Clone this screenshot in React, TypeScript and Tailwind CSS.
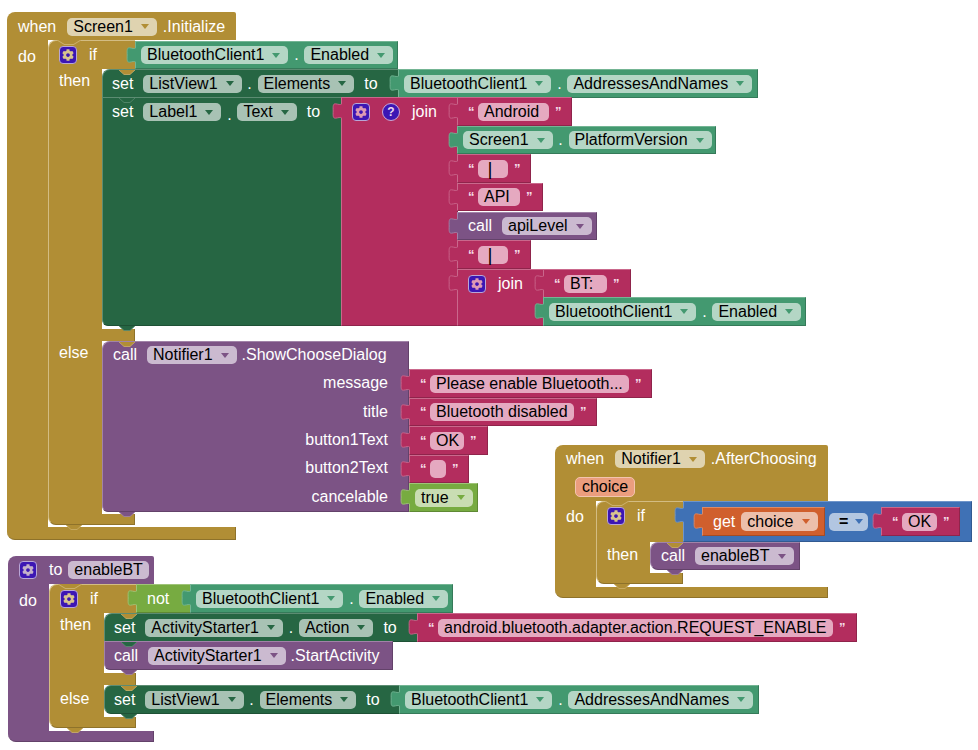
import type { ReactNode } from 'react'
import { FaCog } from 'react-icons/fa'

const TONES = {
  gold: {
    bg: 'bg-[#b18e35]',
    edge: 'border-t-[#cbb06c] border-l-[#cbb06c] border-r-[#8e722a] border-b-[#8e722a]',
    field: 'bg-[#dfd3b0]',
    arrow: 'text-[#b18e35]',
    gear: 'text-[#d8c48e]',
    tab: 'fill-[#b18e35] stroke-[#cbb06c]',
  },
  getter: {
    bg: 'bg-[#439970]',
    edge: 'border-t-[#74b594] border-l-[#74b594] border-r-[#357a59] border-b-[#357a59]',
    field: 'bg-[#b4d6c5]',
    arrow: 'text-[#439970]',
    gear: 'text-[#b4d6c5]',
    tab: 'fill-[#439970] stroke-[#74b594]',
  },
  setter: {
    bg: 'bg-[#266643]',
    edge: 'border-t-[#5c8c72] border-l-[#5c8c72] border-r-[#1e5135] border-b-[#1e5135]',
    field: 'bg-[#a8c2b4]',
    arrow: 'text-[#266643]',
    gear: 'text-[#a8c2b4]',
    tab: 'fill-[#266643] stroke-[#5c8c72]',
  },
  text: {
    bg: 'bg-[#b32d5e]',
    edge: 'border-t-[#ca688c] border-l-[#ca688c] border-r-[#8f244b] border-b-[#8f244b]',
    field: 'bg-[#e5a9c0]',
    arrow: 'text-[#b32d5e]',
    gear: 'text-[#dd9ab4]',
    tab: 'fill-[#b32d5e] stroke-[#ca688c]',
  },
  proc: {
    bg: 'bg-[#7c5385]',
    edge: 'border-t-[#a183a8] border-l-[#a183a8] border-r-[#63426a] border-b-[#63426a]',
    field: 'bg-[#cbbad0]',
    arrow: 'text-[#7c5385]',
    gear: 'text-[#c4b0ca]',
    tab: 'fill-[#7c5385] stroke-[#a183a8]',
  },
  logic: {
    bg: 'bg-[#77ab41]',
    edge: 'border-t-[#9fc478] border-l-[#9fc478] border-r-[#5f8934] border-b-[#5f8934]',
    field: 'bg-[#c9ddb3]',
    arrow: 'text-[#77ab41]',
    gear: 'text-[#c9ddb3]',
    tab: 'fill-[#77ab41] stroke-[#9fc478]',
  },
  math: {
    bg: 'bg-[#3f71b5]',
    edge: 'border-t-[#6f95ca] border-l-[#6f95ca] border-r-[#325a91] border-b-[#325a91]',
    field: 'bg-[#b2c6e1]',
    arrow: 'text-[#3f71b5]',
    gear: 'text-[#b2c6e1]',
    tab: 'fill-[#3f71b5] stroke-[#6f95ca]',
  },
  variable: {
    bg: 'bg-[#d05f2d]',
    edge: 'border-t-[#dd8a66] border-l-[#dd8a66] border-r-[#a64c24] border-b-[#a64c24]',
    field: 'bg-[#ecbfab]',
    arrow: 'text-[#d05f2d]',
    gear: 'text-[#ecbfab]',
    tab: 'fill-[#d05f2d] stroke-[#dd8a66]',
  },
}

type Tone = keyof typeof TONES

type BlockProps = {
  tone: Tone
  className: string
  children?: ReactNode
}

const Block = ({ tone, className, children }: BlockProps) => (
  <div className={`relative flex shrink-0 items-center border ${TONES[tone].bg} ${TONES[tone].edge} ${className}`}>
    {children}
  </div>
)

// output plug on the left side of a value block
const Plug = ({ tone }: { tone: Tone }) => (
  <svg viewBox="0 0 10 16" className={`absolute -left-[10px] top-[5px] z-10 h-[16px] w-[10px] ${TONES[tone].tab}`}>
    <path
      d="M10 0.5 C8.5 2.5 6 1 3.5 0.8 C1 0.6 1 3 1.2 8 C1 13 1 15.4 3.5 15.2 C6 15 8.5 13.5 10 15.5"
      strokeWidth="0.9"
    />
  </svg>
)

const Value = ({ tone, className, children }: BlockProps) => (
  <Block tone={tone} className={className}>
    <Plug tone={tone} />
    {children}
  </Block>
)

// the little trapezoid that links two statement blocks
const Tab = ({ tone, className }: { tone: Tone; className: string }) => (
  <svg viewBox="0 0 16 5" preserveAspectRatio="none" className={`absolute z-10 h-[5px] ${TONES[tone].tab} ${className}`}>
    <path d="M0 0 L5 4.5 H11 L16 0" strokeWidth="0.8" />
  </svg>
)

// statement block: parent's tab cut in on top, own tab hanging below
const Statement = ({ tone, className, children }: BlockProps) => (
  <Block tone={tone} className={className}>
    <Tab tone="gold" className="left-[16px] top-0 w-[16px]" />
    {children}
    <Tab tone={tone} className="-bottom-[6px] left-[16px] w-[16px]" />
  </Block>
)

const Arrow = ({ tone }: { tone: Tone }) => (
  <svg viewBox="0 0 8 5" className={`h-[5px] w-[8px] fill-current ${TONES[tone].arrow}`}>
    <path d="M0 0 H8 L4 5 Z" />
  </svg>
)

const Field = ({ tone, label }: { tone: Tone; label: string }) => (
  <span className={`flex h-[18px] items-center gap-[8px] rounded-[5px] pl-[6px] pr-[8px] leading-[18px] text-black ${TONES[tone].field}`}>
    {label}
    <Arrow tone={tone} />
  </span>
)

const Dot = () => <span className="w-[16px] text-center text-white">.</span>

const Word = ({ children, className = '' }: { children: ReactNode; className?: string }) => (
  <span className={`whitespace-pre leading-[18px] text-white ${className}`}>{children}</span>
)

const Gear = ({ tone }: { tone: Tone }) => (
  <span className={`flex size-[18px] shrink-0 items-center justify-center rounded-[4px] border border-[#b9a6d6] bg-[#3c16b4] ${TONES[tone].gear}`}>
    <FaCog size={12} />
  </span>
)

const Quote = ({ children, className = '' }: { children: string; className?: string }) => (
  <span className={`w-[6px] text-[13px] font-bold leading-[18px] text-[#f6dfe8] ${className}`}>{children}</span>
)

const Str = ({ className, label, fieldClass = '' }: { className: string; label: ReactNode; fieldClass?: string }) => (
  <Value tone="text" className={`gap-[4px] pl-[10px] ${className}`}>
    <Quote>“</Quote>
    <span className={`flex h-[18px] items-center rounded-[5px] bg-[#e5a9c0] pl-[6px] leading-[18px] text-black ${fieldClass}`}>
      {label}
    </span>
    <Quote className="ml-[2px]">”</Quote>
  </Value>
)

const Bar = () => <span className="-ml-[6px] w-full text-center text-[19px]">|</span>

const Getter = ({ className, left, right }: { className: string; left: string; right: string }) => (
  <Value tone="getter" className={`pl-[5px] ${className}`}>
    <Field tone="getter" label={left} />
    <Dot />
    <Field tone="getter" label={right} />
  </Value>
)

const SetterBody = ({ comp, prop }: { comp: string; prop: string }) => (
  <>
    <Word className="mr-[10px]">set</Word>
    <Field tone="setter" label={comp} />
    <Dot />
    <Field tone="setter" label={prop} />
    <Word className="ml-[10px]">to</Word>
  </>
)

const ArgRow = ({ children }: { children: string }) => (
  <div className="flex h-[28.5px] items-center justify-end pr-[20px] leading-[18px] text-white">{children}</div>
)

const CallBlockHeader = ({ comp, method }: { comp: string; method: string }) => (
  <>
    <Word>call</Word>
    <Field tone="proc" label={comp} />
    <Word className="-ml-[5px]">{method}</Word>
  </>
)

// left column of the if block, one piece per row
const IfColumn = ({ className = '', children }: { className?: string; children?: ReactNode }) => (
  <div className={`relative shrink-0 border-l border-[#d3bc82] bg-[#b18e35] pl-[10px] leading-[18px] text-white ${className}`}>
    {children}
  </div>
)

const IfArm = ({ className }: { className: string }) => (
  <div className={`shrink-0 border-r border-[#8e722a] bg-[#b18e35] ${className}`} />
)

const ScreenInitialize = () => (
  <section className="absolute left-[7px] top-[12px] flex w-max flex-col">
    <header className="flex h-[28px] w-[229px] items-center gap-[11px] rounded-t-[8px] rounded-tr-[2px] bg-[#b18e35] pl-[11px] pt-[1px]">
      <Word>when</Word>
      <Field tone="gold" label="Screen1" />
      <Word className="-ml-[5px]">.Initialize</Word>
    </header>
    <div className="flex">
      <div className="w-[41px] shrink-0 bg-[#b18e35] pl-[11px] pt-[5px]">
        <Word>do</Word>
      </div>

      <div className="flex flex-col pb-[2px]">
        <div className="flex">
          <IfColumn className="flex h-[29px] w-[87px] items-center gap-[12px] rounded-tl-[8px] border-t border-t-[#d3bc82] pb-[1px]">
            <Gear tone="gold" />
            if
            <Tab tone="gold" className="-top-px left-[8px] w-[24px]" />
          </IfColumn>
          <Getter className="mt-[1px] h-[28px] w-[263px]" left="BluetoothClient1" right="Enabled" />
        </div>

        <div className="flex">
          <IfColumn className="w-[54px] pt-[3px]">then</IfColumn>
          <div className="flex flex-col">
            <div className="flex">
              <Statement tone="setter" className="h-[29px] w-[297px] rounded-tl-[8px] pl-[9px]">
                <SetterBody comp="ListView1" prop="Elements" />
              </Statement>
              <Getter className="-ml-px h-[29px] w-[360px]" left="BluetoothClient1" right="AddressesAndNames" />
            </div>

            <div className="-mt-px flex">
              <Block tone="setter" className="h-[229px] w-[240px] items-start rounded-bl-[6px] pl-[9px] pt-[5px]">
                <Word className="mr-[10px]">set</Word>
                <Field tone="setter" label="Label1" />
                <Dot />
                <Field tone="setter" label="Text" />
                <Word className="ml-[10px]">to</Word>
                <Tab tone="setter" className="-bottom-[6px] left-[16px] w-[16px]" />
              </Block>
              <Value tone="text" className="-ml-px h-[229px] w-[117px] items-start gap-[12px] pl-[10px] pt-[5px]">
                <Gear tone="text" />
                <span className="flex size-[18px] items-center justify-center rounded-full border border-[#c9a9d8] bg-[#3c16b4] text-[12px] font-bold text-[#e9d8f0]">?</span>
                <Word>join</Word>
              </Value>
              <div className="-ml-px flex flex-col">
                <Str className="h-[29px] w-[115px]" label="Android" fieldClass="w-[71px]" />
                <Getter className="h-[28px] w-[259px]" left="Screen1" right="PlatformVersion" />
                <Str className="h-[29px] w-[74px]" label={<Bar />} fieldClass="w-[30px]" />
                <Str className="h-[28px] w-[86px]" label="API" fieldClass="w-[42px]" />
                <Value tone="proc" className="mt-px h-[28px] w-[140px] gap-[10px] pl-[10px]">
                  <Word>call</Word>
                  <Field tone="proc" label="apiLevel" />
                </Value>
                <Str className="h-[29px] w-[74px]" label={<Bar />} fieldClass="w-[30px]" />
                <div className="flex">
                  <Value tone="text" className="h-[57px] w-[87px] items-start gap-[12px] pl-[10px] pt-[5px]">
                    <Gear tone="text" />
                    <Word>join</Word>
                  </Value>
                  <div className="-ml-px flex flex-col">
                    <Str className="h-[29px] w-[88px]" label="BT:" fieldClass="w-[43px]" />
                    <Getter className="-mt-px h-[29px] w-[263px]" left="BluetoothClient1" right="Enabled" />
                  </div>
                </div>
              </div>
            </div>
          </div>
        </div>

        <div className="flex">
          <IfColumn className="h-[15px] w-[54px]" />
          <IfArm className="mt-[3px] h-[12px] w-[33px]" />
        </div>

        <div className="flex">
          <IfColumn className="w-[54px] pt-[3px]">else</IfColumn>
          <Statement tone="proc" className="h-[171px] w-[307px] flex-col items-stretch rounded-tl-[8px] rounded-bl-[6px]">
            <div className="flex h-[27px] items-center gap-[10px] pl-[10px]">
              <CallBlockHeader comp="Notifier1" method=".ShowChooseDialog" />
            </div>
            <ArgRow>message</ArgRow>
            <ArgRow>title</ArgRow>
            <ArgRow>button1Text</ArgRow>
            <ArgRow>button2Text</ArgRow>
            <ArgRow>cancelable</ArgRow>
          </Statement>
          <div className="flex flex-col pt-[28px]">
            <Str className="h-[29px] w-[243px]" label="Please enable Bluetooth..." fieldClass="w-[199px]" />
            <Str className="h-[28px] w-[188px]" label="Bluetooth disabled" fieldClass="w-[144px]" />
            <Str className="h-[29px] w-[79px]" label="OK" fieldClass="w-[34px]" />
            <Str className="h-[28px] w-[60px]" label="" fieldClass="w-[16px]" />
            <Value tone="logic" className="h-[29px] w-[69px] pl-[5px]">
              <Field tone="logic" label="true" />
            </Value>
          </div>
        </div>

        <div className="flex">
          <IfColumn className="h-[13px] w-[54px] rounded-bl-[8px] border-b border-b-[#8e722a]">
            <Tab tone="gold" className="-bottom-[6px] left-[17px] w-[16px]" />
          </IfColumn>
          <IfArm className="mt-[2px] h-[11px] w-[33px] border-b" />
        </div>
      </div>
    </div>
    <div className="h-[13px] w-[229px] rounded-bl-[8px] border-b border-r border-[#8e722a] bg-[#b18e35]" />
  </section>
)

const AfterChoosing = () => (
  <section className="absolute left-[555px] top-[445px] flex w-max flex-col">
    <header className="h-[56px] w-[273px] rounded-t-[8px] rounded-tr-[2px] bg-[#b18e35]">
      <div className="flex h-[28px] items-center gap-[11px] pl-[11px]">
        <Word>when</Word>
        <Field tone="gold" label="Notifier1" />
        <Word className="-ml-[5px]">.AfterChoosing</Word>
      </div>
      <span className="ml-[20px] mt-[4px] flex h-[20px] w-[60px] items-center justify-center rounded-[5px] border border-[#f3c4af] bg-[#eb9d7e] leading-[18px] text-black">
        choice
      </span>
    </header>
    <div className="flex">
      <div className="w-[41px] shrink-0 bg-[#b18e35] pl-[11px] pt-[4px]">
        <Word>do</Word>
      </div>

      <div className="flex flex-col pb-[3px]">
        <div className="flex">
          <IfColumn className="flex h-[41px] w-[87px] items-start gap-[12px] rounded-tl-[8px] border-t border-t-[#d3bc82] pt-[5px]">
            <Gear tone="gold" />
            if
            <Tab tone="gold" className="-top-px left-[8px] w-[24px]" />
          </IfColumn>
          <Value tone="math" className="h-[41px] w-[289px] pl-[18px]">
            <Value tone="variable" className="h-[29px] w-[123px] gap-[6px] pl-[10px]">
              <Word>get</Word>
              <span className="flex h-[19px] items-center gap-[8px] rounded-[5px] bg-[#ecbfab] pl-[6px] pr-[8px] leading-[18px] text-black">
                choice
                <Arrow tone="variable" />
              </span>
            </Value>
            <span className="ml-[4px] flex h-[18px] w-[39px] shrink-0 items-center gap-[7px] rounded-[5px] bg-[#b2c6e1] pl-[10px] font-bold leading-[18px] text-black">
              =
              <Arrow tone="math" />
            </span>
            <Str className="ml-[13px] h-[29px] w-[79px]" label="OK" fieldClass="w-[35px]" />
          </Value>
        </div>

        <div className="flex">
          <IfColumn className="w-[54px] pt-[4px]">then</IfColumn>
          <Statement tone="proc" className="h-[28px] w-[150px] gap-[10px] rounded-l-[8px] pl-[10px]">
            <Word>call</Word>
            <Field tone="proc" label="enableBT" />
          </Statement>
        </div>

        <div className="flex">
          <IfColumn className="h-[14px] w-[54px] rounded-bl-[8px] border-b border-b-[#8e722a]">
            <Tab tone="gold" className="-bottom-[6px] left-[17px] w-[16px]" />
          </IfColumn>
          <IfArm className="mt-[3px] h-[11px] w-[33px] border-b" />
        </div>
      </div>
    </div>
    <div className="h-[11px] w-[273px] rounded-bl-[8px] border-b border-r border-[#8e722a] bg-[#b18e35]" />
  </section>
)

const EnableBT = () => (
  <section className="absolute left-[8px] top-[556px] flex w-max flex-col">
    <header className="flex h-[28px] w-[146px] items-center rounded-t-[8px] rounded-tr-[2px] bg-[#7c5385] pl-[11px]">
      <Gear tone="proc" />
      <Word className="ml-[12px] mr-[6px]">to</Word>
      <span className="flex h-[18px] items-center rounded-[5px] bg-[#cbbad0] px-[6px] leading-[18px] text-black">enableBT</span>
    </header>
    <div className="flex">
      <div className="w-[41px] shrink-0 bg-[#7c5385] pl-[11px] pt-[5px]">
        <Word>do</Word>
      </div>

      <div className="flex flex-col pb-[3px]">
        <div className="flex">
          <IfColumn className="flex h-[29px] w-[87px] items-center gap-[12px] rounded-tl-[8px] border-t border-t-[#d3bc82]">
            <Gear tone="gold" />
            if
            <Tab tone="gold" className="-top-px left-[8px] w-[24px]" />
          </IfColumn>
          <Value tone="logic" className="h-[29px] w-[55px] pl-[10px]">
            <Word>not</Word>
          </Value>
          <Getter className="-ml-px h-[29px] w-[263px]" left="BluetoothClient1" right="Enabled" />
        </div>

        <div className="flex">
          <IfColumn className="w-[55px] pt-[3px]">then</IfColumn>
          <div className="flex flex-col">
            <div className="flex">
              <Statement tone="setter" className="h-[29px] w-[314px] rounded-tl-[8px] pl-[9px]">
                <SetterBody comp="ActivityStarter1" prop="Action" />
              </Statement>
              <Str className="-ml-px h-[29px] w-[440px]" label="android.bluetooth.adapter.action.REQUEST_ENABLE" fieldClass="w-[395px]" />
            </div>
            <Block tone="proc" className="-mt-px h-[29px] w-[289px] gap-[10px] rounded-bl-[6px] pl-[9px]">
              <CallBlockHeader comp="ActivityStarter1" method=".StartActivity" />
              <Tab tone="proc" className="-bottom-[6px] left-[16px] w-[16px]" />
            </Block>
          </div>
        </div>

        <div className="flex">
          <IfColumn className="h-[15px] w-[55px]" />
          <IfArm className="mt-[3px] h-[12px] w-[32px]" />
        </div>

        <div className="flex">
          <IfColumn className="w-[55px] pt-[5px]">else</IfColumn>
          <Statement tone="setter" className="h-[29px] w-[296px] rounded-l-[7px] pl-[9px]">
            <SetterBody comp="ListView1" prop="Elements" />
          </Statement>
          <Getter className="-ml-px h-[29px] w-[360px]" left="BluetoothClient1" right="AddressesAndNames" />
        </div>

        <div className="flex">
          <IfColumn className="h-[14px] w-[55px] rounded-bl-[8px] border-b border-b-[#8e722a]">
            <Tab tone="gold" className="-bottom-[6px] left-[17px] w-[16px]" />
          </IfColumn>
          <IfArm className="mt-[3px] h-[11px] w-[32px] border-b" />
        </div>
      </div>
    </div>
    <div className="h-[11px] w-[146px] rounded-bl-[8px] border-b border-r border-[#63426a] bg-[#7c5385]" />
  </section>
)

const App = () => {
  return (
    <div className="relative h-[750px] w-[978px] overflow-hidden bg-white font-['Liberation_Sans',Arial,sans-serif] text-[16px]">
      <ScreenInitialize />
      <AfterChoosing />
      <EnableBT />
    </div>
  )
}

export default App
